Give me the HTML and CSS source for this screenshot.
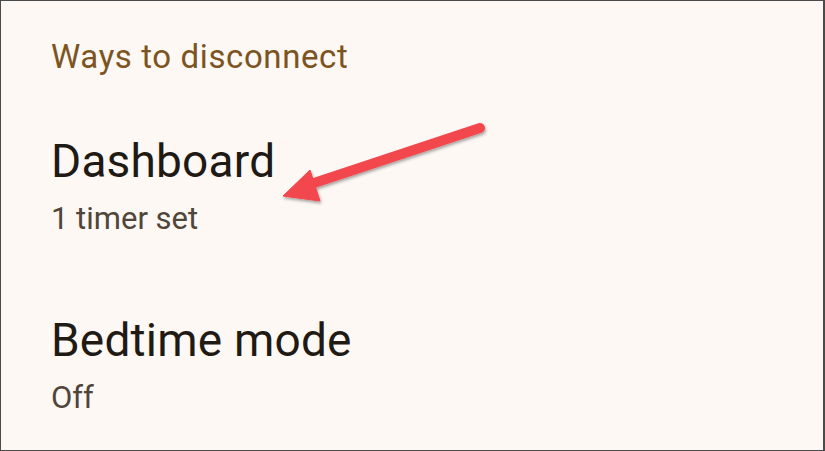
FILE: index.html
```html
<!DOCTYPE html>
<html lang="en">
<head>
  <meta charset="UTF-8">
  <title>Digital Wellbeing</title>
  <meta name="viewport" content="width=device-width, initial-scale=1.0">
  <link rel="stylesheet" href="styles.css">
</head>

<body>
  <div class="screen">
    <div class="section-title">Ways to disconnect</div>

    <div class="item">
      <div class="item-title">Dashboard</div>
      <div class="item-summary">1 timer set</div>
    </div>

    <div class="item">
      <div class="item-title">Bedtime mode</div>
      <div class="item-summary">Off</div>
    </div>

    <!-- callout arrow pointing at the dashboard row -->
    <svg class="callout" width="825" height="451" viewBox="0 0 825 451">
      <defs>
        <filter id="shadow" x="-20%" y="-20%" width="140%" height="140%">
          <feDropShadow dx="1" dy="2" stdDeviation="1.5" flood-color="#000" flood-opacity="0.35"/>
        </filter>
      </defs>
      <g filter="url(#shadow)" fill="#f2464d" stroke="#f2464d">
        <line x1="480" y1="128" x2="305" y2="186" stroke-width="10" stroke-linecap="round"/>
        <polygon points="283,196 310,170 320,201" stroke-width="1" stroke-linejoin="round"/>
      </g>
    </svg>
  </div>
</body>
</html>
```

FILE: styles.css
```css
html, body {
  margin: 0;
  padding: 0;
}

body {
  width: 825px;
  height: 451px;
  overflow: hidden;
  font-family: Roboto, "Noto Sans", sans-serif;
}

.screen {
  position: relative; /* для стрелки поверх списка */
  box-sizing: border-box;
  width: 825px;
  height: 451px;
  border: 1px solid #4a4a4a;
  border-right-width: 2px;
  background: #fdf8f4;
  padding: 36px 0 0 50px;
}

.section-title {
  font-size: 33px;
  font-weight: 400;
  color: #7b5421;
  line-height: 40px;
  letter-spacing: 0.6px;
}

.item {
  padding-top: 56px;
}

.item + .item {
  padding-top: 73px;
}

.item-title {
  font-size: 46px;
  color: #1f1a14;
  line-height: 56px;
  letter-spacing: 0.2px;
}

.item-summary {
  font-size: 31px;
  color: #4f4539;
  line-height: 40px;
  margin-top: 10px;
}

.callout {
  position: absolute;
  top: -1px;
  left: -1px;
  pointer-events: none;
}
```
